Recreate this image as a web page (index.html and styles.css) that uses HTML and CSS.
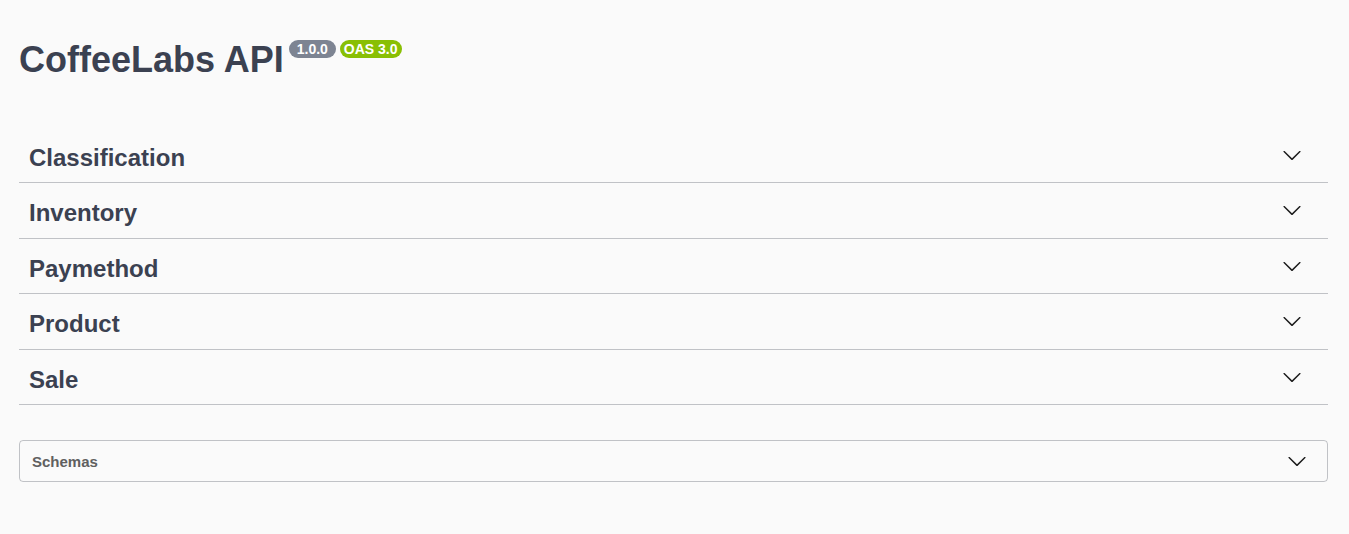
FILE: index.html
```html
<!DOCTYPE html>
<html lang="en">
<head>
<meta charset="utf-8">
<title>CoffeeLabs API</title>
<link rel="stylesheet" href="styles.css">
</head>
<body>
<div class="wrapper">
  <div class="info">
    <h2 class="title"><span class="title-text">CoffeeLabs API</span><span class="badge badge-version">1.0.0</span><span class="badge badge-oas">OAS 3.0</span></h2>
  </div>
  <div class="tags">
    <h3 class="tag"><span class="tag-name">Classification</span><svg class="arrow" viewBox="0 0 20 20"><path d="M17.418 6.109c.272-.268.709-.268.979 0s.271.701 0 .969l-7.908 7.83c-.27.268-.707.268-.979 0l-7.908-7.83c-.27-.268-.27-.701 0-.969.271-.268.709-.268.979 0L10 13.25l7.418-7.141z"/></svg></h3>
    <h3 class="tag"><span class="tag-name">Inventory</span><svg class="arrow" viewBox="0 0 20 20"><path d="M17.418 6.109c.272-.268.709-.268.979 0s.271.701 0 .969l-7.908 7.83c-.27.268-.707.268-.979 0l-7.908-7.83c-.27-.268-.27-.701 0-.969.271-.268.709-.268.979 0L10 13.25l7.418-7.141z"/></svg></h3>
    <h3 class="tag"><span class="tag-name">Paymethod</span><svg class="arrow" viewBox="0 0 20 20"><path d="M17.418 6.109c.272-.268.709-.268.979 0s.271.701 0 .969l-7.908 7.83c-.27.268-.707.268-.979 0l-7.908-7.83c-.27-.268-.27-.701 0-.969.271-.268.709-.268.979 0L10 13.25l7.418-7.141z"/></svg></h3>
    <h3 class="tag"><span class="tag-name">Product</span><svg class="arrow" viewBox="0 0 20 20"><path d="M17.418 6.109c.272-.268.709-.268.979 0s.271.701 0 .969l-7.908 7.83c-.27.268-.707.268-.979 0l-7.908-7.83c-.27-.268-.27-.701 0-.969.271-.268.709-.268.979 0L10 13.25l7.418-7.141z"/></svg></h3>
    <h3 class="tag"><span class="tag-name">Sale</span><svg class="arrow" viewBox="0 0 20 20"><path d="M17.418 6.109c.272-.268.709-.268.979 0s.271.701 0 .969l-7.908 7.83c-.27.268-.707.268-.979 0l-7.908-7.83c-.27-.268-.27-.701 0-.969.271-.268.709-.268.979 0L10 13.25l7.418-7.141z"/></svg></h3>
  </div>
  <section class="models">
    <h4 class="models-head"><span class="models-name">Schemas</span><svg class="arrow models-arrow" viewBox="0 0 20 20"><path d="M17.418 6.109c.272-.268.709-.268.979 0s.271.701 0 .969l-7.908 7.83c-.27.268-.707.268-.979 0l-7.908-7.83c-.27-.268-.27-.701 0-.969.271-.268.709-.268.979 0L10 13.25l7.418-7.141z"/></svg></h4>
  </section>
</div>
</body>
</html>
```
FILE: styles.css
```css
html, body {
  margin: 0;
  padding: 0;
}
body {
  background: #fafafa;
  font-family: "Liberation Sans", Arial, sans-serif;
  color: #3b4151;
}
.wrapper {
  padding: 0 21px 0 19px;
}
.info {
  padding-top: 39px;
  margin-bottom: 52.5px;
}
.title {
  margin: 0;
  display: flex;
  align-items: flex-start;
  font-size: 36px;
  line-height: 41px;
  font-weight: 700;
  color: #3b4151;
}
.badge {
  font-family: "Liberation Sans", Arial, sans-serif;
  font-size: 14px;
  line-height: 14px;
  font-weight: 700;
  color: #fff;
  border-radius: 57px;
  padding: 2px 8px;
  margin-top: 1px;
  margin-left: 5px;
  background: #7d8492;
}
.badge-oas {
  background: #89bf04;
  padding: 2px 4px;
  margin-left: 4px;
}
.tag {
  display: flex;
  align-items: center;
  margin: 0 0 5px;
  padding: 10px 20px 10px 10px;
  border-bottom: 1px solid rgba(59, 65, 81, 0.3);
  font-size: 24px;
  line-height: 29.5px;
  font-weight: 700;
  color: #3b4151;
}
.tag-name {
  flex: 1;
}
.arrow {
  width: 20px;
  height: 20px;
  flex: none;
  fill: #1b1b1b;
}
.tag .arrow {
  margin-right: 6px;
  margin-bottom: 5px;
}
.models {
  margin-top: 35px;
  border: 1px solid rgba(59, 65, 81, 0.3);
  border-radius: 4px;
}
.models-head {
  margin: 0;
  height: 40px;
  display: flex;
  align-items: center;
  padding: 0 20px 0 12px;
  font-size: 15px;
  font-weight: 700;
  color: #606060;
}
.models-name {
  flex: 1;
}
```
